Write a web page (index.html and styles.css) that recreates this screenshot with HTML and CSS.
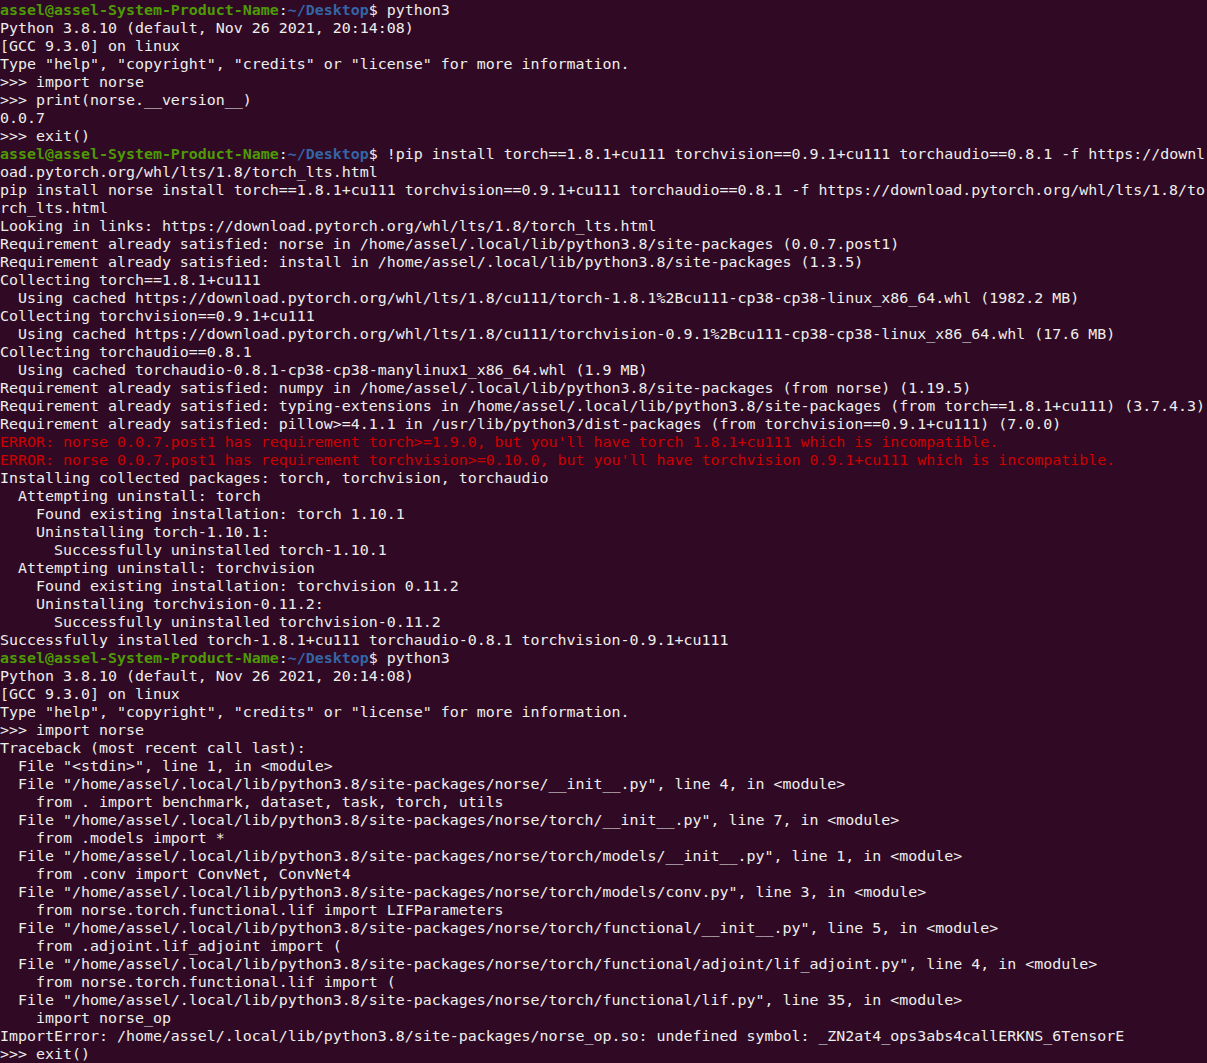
FILE: index.html
```html
<!DOCTYPE html>
<html>
<head>
<meta charset="utf-8">
<link rel="stylesheet" href="styles.css">
</head>
<body>
<pre class="term"><span class="u">assel@assel-System-Product-Name</span>:<span class="p">~/Desktop</span>$ python3
Python 3.8.10 (default, Nov 26 2021, 20:14:08)
[GCC 9.3.0] on linux
Type "help", "copyright", "credits" or "license" for more information.
&gt;&gt;&gt; import norse
&gt;&gt;&gt; print(norse.__version__)
0.0.7
&gt;&gt;&gt; exit()
<span class="u">assel@assel-System-Product-Name</span>:<span class="p">~/Desktop</span>$ !pip install torch==1.8.1+cu111 torchvision==0.9.1+cu111 torchaudio==0.8.1 -f https://downl
oad.pytorch.org/whl/lts/1.8/torch_lts.html
pip install norse install torch==1.8.1+cu111 torchvision==0.9.1+cu111 torchaudio==0.8.1 -f https://download.pytorch.org/whl/lts/1.8/to
rch_lts.html
Looking in links: https://download.pytorch.org/whl/lts/1.8/torch_lts.html
Requirement already satisfied: norse in /home/assel/.local/lib/python3.8/site-packages (0.0.7.post1)
Requirement already satisfied: install in /home/assel/.local/lib/python3.8/site-packages (1.3.5)
Collecting torch==1.8.1+cu111
  Using cached https://download.pytorch.org/whl/lts/1.8/cu111/torch-1.8.1%2Bcu111-cp38-cp38-linux_x86_64.whl (1982.2 MB)
Collecting torchvision==0.9.1+cu111
  Using cached https://download.pytorch.org/whl/lts/1.8/cu111/torchvision-0.9.1%2Bcu111-cp38-cp38-linux_x86_64.whl (17.6 MB)
Collecting torchaudio==0.8.1
  Using cached torchaudio-0.8.1-cp38-cp38-manylinux1_x86_64.whl (1.9 MB)
Requirement already satisfied: numpy in /home/assel/.local/lib/python3.8/site-packages (from norse) (1.19.5)
Requirement already satisfied: typing-extensions in /home/assel/.local/lib/python3.8/site-packages (from torch==1.8.1+cu111) (3.7.4.3)
Requirement already satisfied: pillow&gt;=4.1.1 in /usr/lib/python3/dist-packages (from torchvision==0.9.1+cu111) (7.0.0)
<span class="e">ERROR: norse 0.0.7.post1 has requirement torch&gt;=1.9.0, but you'll have torch 1.8.1+cu111 which is incompatible.</span>
<span class="e">ERROR: norse 0.0.7.post1 has requirement torchvision&gt;=0.10.0, but you'll have torchvision 0.9.1+cu111 which is incompatible.</span>
Installing collected packages: torch, torchvision, torchaudio
  Attempting uninstall: torch
    Found existing installation: torch 1.10.1
    Uninstalling torch-1.10.1:
      Successfully uninstalled torch-1.10.1
  Attempting uninstall: torchvision
    Found existing installation: torchvision 0.11.2
    Uninstalling torchvision-0.11.2:
      Successfully uninstalled torchvision-0.11.2
Successfully installed torch-1.8.1+cu111 torchaudio-0.8.1 torchvision-0.9.1+cu111
<span class="u">assel@assel-System-Product-Name</span>:<span class="p">~/Desktop</span>$ python3
Python 3.8.10 (default, Nov 26 2021, 20:14:08)
[GCC 9.3.0] on linux
Type "help", "copyright", "credits" or "license" for more information.
&gt;&gt;&gt; import norse
Traceback (most recent call last):
  File "&lt;stdin&gt;", line 1, in &lt;module&gt;
  File "/home/assel/.local/lib/python3.8/site-packages/norse/__init__.py", line 4, in &lt;module&gt;
    from . import benchmark, dataset, task, torch, utils
  File "/home/assel/.local/lib/python3.8/site-packages/norse/torch/__init__.py", line 7, in &lt;module&gt;
    from .models import *
  File "/home/assel/.local/lib/python3.8/site-packages/norse/torch/models/__init__.py", line 1, in &lt;module&gt;
    from .conv import ConvNet, ConvNet4
  File "/home/assel/.local/lib/python3.8/site-packages/norse/torch/models/conv.py", line 3, in &lt;module&gt;
    from norse.torch.functional.lif import LIFParameters
  File "/home/assel/.local/lib/python3.8/site-packages/norse/torch/functional/__init__.py", line 5, in &lt;module&gt;
    from .adjoint.lif_adjoint import (
  File "/home/assel/.local/lib/python3.8/site-packages/norse/torch/functional/adjoint/lif_adjoint.py", line 4, in &lt;module&gt;
    from norse.torch.functional.lif import (
  File "/home/assel/.local/lib/python3.8/site-packages/norse/torch/functional/lif.py", line 35, in &lt;module&gt;
    import norse_op
ImportError: /home/assel/.local/lib/python3.8/site-packages/norse_op.so: undefined symbol: _ZN2at4_ops3abs4callERKNS_6TensorE
&gt;&gt;&gt; exit()</pre>
</body>
</html>
```
FILE: styles.css
```css
html, body {
  margin: 0;
  padding: 0;
  background: #300a24;
  height: 100%;
  overflow: hidden;
}
.term {
  margin: 0;
  padding: 1px 0 0 0;
  font-family: "DejaVu Sans Mono", monospace;
  font-size: 14.94px;
  line-height: 18px;
  color: #eeeeec;
  white-space: pre;
}
.u {
  color: #4e9a06;
  font-weight: bold;
}
.p {
  color: #3465a4;
  font-weight: bold;
}
.e {
  color: #cc0000;
}
```
